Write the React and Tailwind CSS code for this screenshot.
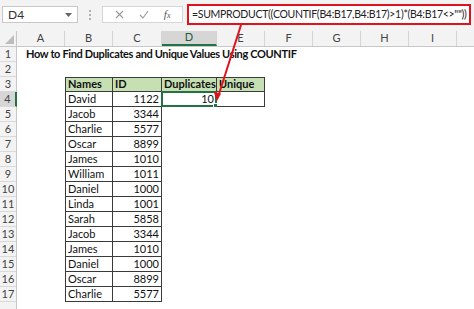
import React from 'react';

const COLS = [
  { key: 'A', w: 'w-[48px]' },
  { key: 'B', w: 'w-[48px]' },
  { key: 'C', w: 'w-[49px]' },
  { key: 'D', w: 'w-[55px]' },
  { key: 'E', w: 'w-[48px]' },
  { key: 'F', w: 'w-[48px]' },
  { key: 'G', w: 'w-[48px]' },
  { key: 'H', w: 'w-[48px]' },
  { key: 'I', w: 'w-[48px]' },
  { key: '', w: 'w-[48px]' },
];

const PEOPLE = [
  ['David', 1122], ['Jacob', 3344], ['Charlie', 5577], ['Oscar', 8899],
  ['James', 1010], ['William', 1011], ['Daniel', 1000], ['Linda', 1001],
  ['Sarah', 5858], ['Jacob', 3344], ['James', 1010], ['Daniel', 1000],
  ['Oscar', 8899], ['Charlie', 5577],
];

const FORMULA = '=SUMPRODUCT((COUNTIF(B4:B17,B4:B17)>1)*(B4:B17<>""))';

function cellInfo(row, col) {
  if (row === 1 && col === 'A') return { text: 'How to Find Duplicates and Unique Values Using COUNTIF', bold: true, overflow: true };
  if (row === 3) {
    const heads = { B: 'Names', C: 'ID', D: 'Duplicates', E: 'Unique' };
    if (heads[col]) return { text: heads[col], bold: true, fill: true, border: true };
  }
  if (row >= 4 && row <= 17) {
    const p = PEOPLE[row - 4];
    if (col === 'B') return { text: p[0], border: true };
    if (col === 'C') return { text: String(p[1]), align: 'right', border: true };
  }
  if (row === 4 && col === 'D') return { text: '10', align: 'right', border: true, selected: true };
  if (row === 4 && col === 'E') return { text: '', border: true };
  return null;
}

function Cell({ row, col }) {
  const info = cellInfo(row, col.key);
  const cls = [col.w, 'h-full shrink-0 relative flex items-center px-[2px]'];
  if (info?.border) {
    cls.push('border-r border-b border-[#3a3a3a]');
    if (col.key === 'B') cls.push('border-l');
    if (row === 3) cls.push('border-t');
  }
  if (info?.fill) cls.push('bg-[#c6e0b4]');
  if (info?.align === 'right') cls.push('justify-end');
  return (
    <div className={cls.join(' ')}>
      {info?.text && (
        <span className={`whitespace-nowrap ${info.bold ? 'font-bold' : ''} ${info.overflow ? 'absolute left-[9px] tracking-[-0.35px]' : ''}`}>
          {info.text}
        </span>
      )}
      {info?.selected && (
        <div className="absolute -left-[1px] -top-[1px] -right-[1px] -bottom-[1px] border-2 border-[#217346]">
          <div className="absolute -right-[3px] -bottom-[3px] w-[5px] h-[5px] bg-[#217346] border border-white" />
        </div>
      )}
    </div>
  );
}

function FormulaBar() {
  return (
    <div className="h-[31px] bg-[#f3f3f3] flex items-start pt-[4px] px-[2px]">
      <div className="mt-[2px] w-[76px] h-[17px] bg-white border border-[#c8c8c8] flex items-center justify-between px-[5px] text-[12px] text-[#333]">
        <span>D4</span>
        <svg width="7" height="4" viewBox="0 0 7 4"><path d="M0 0h7L3.5 4z" fill="#666" /></svg>
      </div>
      <div className="w-[24px] h-[21px] flex flex-col items-center justify-center gap-[2px]">
        <span className="w-[2px] h-[2px] bg-[#b0b0b0]" />
        <span className="w-[2px] h-[2px] bg-[#b0b0b0]" />
        <span className="w-[2px] h-[2px] bg-[#b0b0b0]" />
      </div>
      <div className="mt-[2px] w-[81px] h-[17px] bg-white border border-[#d6d6d6] flex items-center justify-around px-[4px]">
        <svg width="9" height="9" viewBox="0 0 9 9"><path d="M1 1l7 7M8 1l-7 7" stroke="#9a9a9a" strokeWidth="1.1" /></svg>
        <svg width="10" height="9" viewBox="0 0 10 9"><path d="M1 5l3 3 5-7" stroke="#9a9a9a" strokeWidth="1.1" fill="none" /></svg>
        <span className="text-[11px] italic text-[#555]" style={{ fontFamily: '"Liberation Serif", serif' }}>f<span className="text-[8px]">x</span></span>
      </div>
      <div className="ml-[4px] w-[284px] h-[21px] bg-white border-2 border-[#e0121c] flex items-center pl-[3px] text-[10.5px] tracking-[-0.3px] text-[#222] whitespace-nowrap overflow-hidden">
        {FORMULA}
      </div>
    </div>
  );
}

function HeaderRow() {
  return (
    <div className="h-[16px] flex bg-[#f3f3f3] border-b border-[#c8c8c8] text-[11px] text-[#444]">
      <div className="w-[17px] h-full shrink-0 relative border-r border-[#c8c8c8]">
        <svg className="absolute right-[2px] bottom-[2px]" width="9" height="9" viewBox="0 0 9 9"><path d="M9 0v9H0z" fill="#bdbdbd" /></svg>
      </div>
      {COLS.map((c, i) => (
        <div
          key={i}
          className={`${c.w} h-full shrink-0 flex items-center justify-center border-r border-[#d4d4d4] ${c.key === 'D' ? 'bg-[#d6d6d6] border-b-2 border-b-[#217346] text-[#1e5e38]' : ''}`}
        >
          {c.key}
        </div>
      ))}
    </div>
  );
}

export default function App() {
  const rows = Array.from({ length: 18 }, (_, i) => i + 1);
  return (
    <div className="w-[474px] h-[309px] overflow-hidden bg-white relative text-[#111]" style={{ fontFamily: 'Lato, "Liberation Sans", sans-serif' }}>
      <FormulaBar />
      <HeaderRow />
      <div className="text-[11px]">
        {rows.map((r) => (
          <div key={r} className="h-[15px] flex">
            <div className={`w-[17px] h-full shrink-0 flex items-center justify-center border-b border-[#d9d9d9] text-[#444] ${r === 4 ? 'bg-[#d6d6d6] border-r-2 border-r-[#217346]' : 'bg-[#f3f3f3] border-r border-r-[#c8c8c8]'}`}>
              {r < 18 ? r : ''}
            </div>
            {COLS.map((c, i) => (
              <Cell key={i} row={r} col={c} />
            ))}
          </div>
        ))}
      </div>
      <svg className="absolute left-0 top-0 pointer-events-none" width="474" height="309">
        <line x1="241" y1="25" x2="219" y2="94" stroke="#e0121c" strokeWidth="2" />
        <path d="M217 101l-3.5-9.5 7.5 2.2z" fill="#e0121c" />
      </svg>
    </div>
  );
}
